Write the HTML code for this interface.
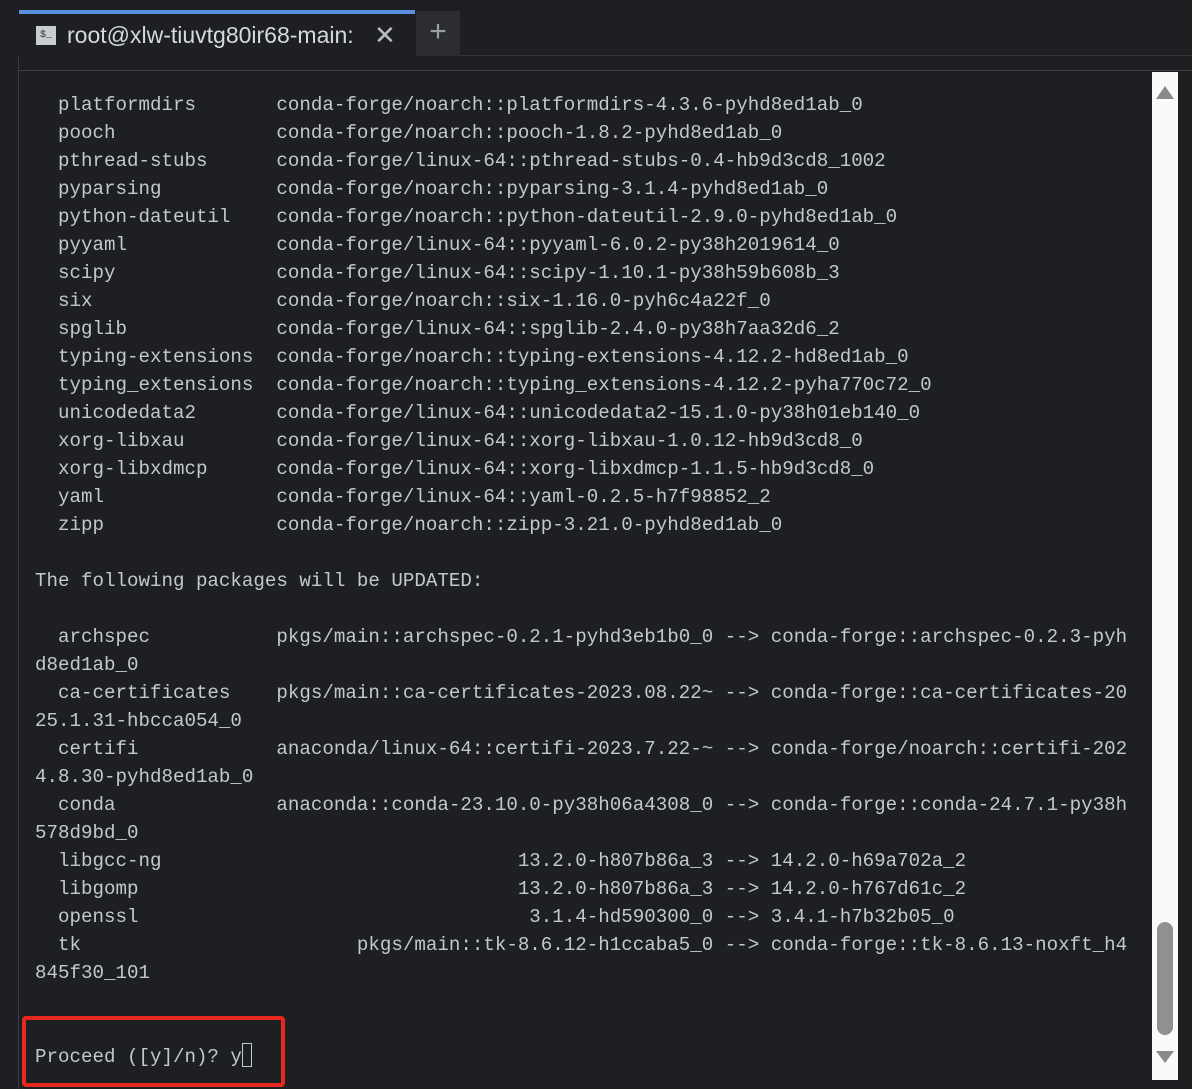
<!DOCTYPE html>
<html><head><meta charset="utf-8"><style>
html,body{margin:0;padding:0;width:1192px;height:1089px;background:#1e1f22;overflow:hidden;position:relative}
.vl{position:absolute;left:18px;top:56px;width:1px;height:1033px;background:#3a3c41}
.hl{position:absolute;left:18px;top:70px;width:1174px;height:1px;background:#3e4046}
.tab{position:absolute;left:19px;top:10px;width:396px;height:60px;background:#1e1f22}
.tab .bar{position:absolute;left:0;top:0;width:396px;height:4px;background:#5b8fe0}
.icon{position:absolute;left:17px;top:16px;width:20px;height:19px;background:#c9ccd1;color:#333;font:10px "Liberation Mono",monospace;line-height:19px;text-align:center}
.title{position:absolute;left:48px;top:9px;color:#d6d9de;font:23px "Liberation Sans",sans-serif;line-height:32px;white-space:nowrap;width:306px;overflow:hidden}
.x{position:absolute;left:355px;top:12px;color:#b9bcc2;font:26px "Liberation Sans",sans-serif;line-height:26px}
.plus{position:absolute;left:416px;top:11px;width:44px;height:45px;background:#2b2d31;color:#9a9ea6;font:30px "Liberation Sans",sans-serif;text-align:center;line-height:42px}
.plusl{position:absolute;left:460px;top:55px;width:732px;height:1px;background:#34363b}
pre{position:absolute;left:35px;top:91px;margin:0;font:19.17px "Liberation Mono",monospace;line-height:28px;color:#c3c8cf}
.sb{position:absolute;left:1152px;top:72px;width:26px;height:1008px;background:#fafafa}
.up{position:absolute;left:1156px;top:86px;width:0;height:0;border-left:9px solid transparent;border-right:9px solid transparent;border-bottom:13px solid #8a8a8a}
.dn{position:absolute;left:1156px;top:1051px;width:0;height:0;border-left:9px solid transparent;border-right:9px solid transparent;border-top:12px solid #8a8a8a}
.th{position:absolute;left:1157px;top:922px;width:16px;height:113px;background:#909090;border-radius:8px}
.rb{position:absolute;left:22px;top:1016px;width:255px;height:63px;border:4px solid #e8271f;border-radius:4px}
.cur{display:inline-block;width:10px;height:24px;border:1px solid #c3c8cf;vertical-align:-5px;box-sizing:border-box}
</style></head><body>
<div class="vl"></div><div class="hl"></div>
<div class="tab"><div class="bar"></div><div class="icon">$_</div><div class="title">root@xlw-tiuvtg80ir68-main:</div><div class="x">✕</div></div>
<div class="plus">+</div><div class="plusl"></div>
<pre>  platformdirs       conda-forge/noarch::platformdirs-4.3.6-pyhd8ed1ab_0
  pooch              conda-forge/noarch::pooch-1.8.2-pyhd8ed1ab_0
  pthread-stubs      conda-forge/linux-64::pthread-stubs-0.4-hb9d3cd8_1002
  pyparsing          conda-forge/noarch::pyparsing-3.1.4-pyhd8ed1ab_0
  python-dateutil    conda-forge/noarch::python-dateutil-2.9.0-pyhd8ed1ab_0
  pyyaml             conda-forge/linux-64::pyyaml-6.0.2-py38h2019614_0
  scipy              conda-forge/linux-64::scipy-1.10.1-py38h59b608b_3
  six                conda-forge/noarch::six-1.16.0-pyh6c4a22f_0
  spglib             conda-forge/linux-64::spglib-2.4.0-py38h7aa32d6_2
  typing-extensions  conda-forge/noarch::typing-extensions-4.12.2-hd8ed1ab_0
  typing_extensions  conda-forge/noarch::typing_extensions-4.12.2-pyha770c72_0
  unicodedata2       conda-forge/linux-64::unicodedata2-15.1.0-py38h01eb140_0
  xorg-libxau        conda-forge/linux-64::xorg-libxau-1.0.12-hb9d3cd8_0
  xorg-libxdmcp      conda-forge/linux-64::xorg-libxdmcp-1.1.5-hb9d3cd8_0
  yaml               conda-forge/linux-64::yaml-0.2.5-h7f98852_2
  zipp               conda-forge/noarch::zipp-3.21.0-pyhd8ed1ab_0

The following packages will be UPDATED:

  archspec           pkgs/main::archspec-0.2.1-pyhd3eb1b0_0 --> conda-forge::archspec-0.2.3-pyh
d8ed1ab_0
  ca-certificates    pkgs/main::ca-certificates-2023.08.22~ --> conda-forge::ca-certificates-20
25.1.31-hbcca054_0
  certifi            anaconda/linux-64::certifi-2023.7.22-~ --> conda-forge/noarch::certifi-202
4.8.30-pyhd8ed1ab_0
  conda              anaconda::conda-23.10.0-py38h06a4308_0 --> conda-forge::conda-24.7.1-py38h
578d9bd_0
  libgcc-ng                               13.2.0-h807b86a_3 --> 14.2.0-h69a702a_2
  libgomp                                 13.2.0-h807b86a_3 --> 14.2.0-h767d61c_2
  openssl                                  3.1.4-hd590300_0 --> 3.4.1-h7b32b05_0
  tk                        pkgs/main::tk-8.6.12-h1ccaba5_0 --> conda-forge::tk-8.6.13-noxft_h4
845f30_101


Proceed ([y]/n)? y<span class="cur"></span></pre>
<div class="sb"></div><div class="up"></div><div class="th"></div><div class="dn"></div>
<div class="rb"></div>
</body></html>
